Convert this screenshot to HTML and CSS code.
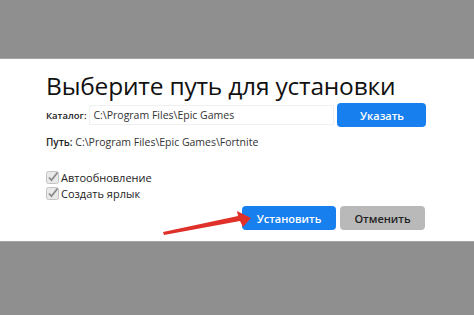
FILE: index.html
```html
<!DOCTYPE html>
<html lang="ru">
<head>
  <meta charset="UTF-8" />
  <title>Выберите путь для установки</title>
  <link rel="stylesheet" href="styles.css">
</head>
<body>
  <div class="band top"></div>

  <div class="dialog">
    <h1>Выберите путь для установки</h1>

    <div class="row">
      <label class="label">Каталог:</label>
      <div class="field">C:\Program Files\Epic Games</div>
      <button class="btn primary pick">Указать</button>
    </div>

    <div class="path"><span class="label">Путь:</span> C:\Program Files\Epic Games\Fortnite</div>

    <div class="checks">
      <div class="check">
        <svg class="box" width="13" height="13" viewBox="0 0 13 13">
          <rect x="0.5" y="0.5" width="12" height="12" rx="2" fill="#e9e9e9" stroke="#c4c4c4"/>
          <path d="M3 6.5 L5.5 9.2 L11.5 1.5" fill="none" stroke="#8a8a8a" stroke-width="1.8"/>
        </svg>
        Автообновление
      </div>
      <div class="check">
        <svg class="box" width="13" height="13" viewBox="0 0 13 13">
          <rect x="0.5" y="0.5" width="12" height="12" rx="2" fill="#e9e9e9" stroke="#c4c4c4"/>
          <path d="M3 6.5 L5.5 9.2 L11.5 1.5" fill="none" stroke="#8a8a8a" stroke-width="1.8"/>
        </svg>
        Создать ярлык
      </div>
    </div>

    <div class="actions">
      <button class="btn primary">Установить</button>
      <button class="btn cancel">Отменить</button>
    </div>

    <svg class="arrow" width="100" height="40" viewBox="0 0 100 40">
      <path d="M3 27 L78 11 L77 6 L91 13 L83 22 L80 16 L4 30 Z" fill="#e0302a"/>
    </svg>
  </div>

  <div class="band bottom"></div>
</body>
</html>
```

FILE: styles.css
```css
body {
  margin: 0;
  font-family: "Open Sans", sans-serif;
  background: #8f8f8f;
  color: #1a1a1a;
}

.band {
  background: #8f8f8f;
}

.top {
  height: 58px;
  border-bottom: 1px solid #a6a6a6;
}

.bottom {
  height: 73px;
  border-top: 1px solid #a6a6a6;
}

.dialog {
  position: relative;
  background: #fff;
  height: 182px;
  padding: 0 46px;
  box-sizing: border-box;
}

h1 {
  margin: 0;
  padding-top: 11px;
  font-size: 24.5px;
  font-weight: 400;
  line-height: 32px;
  letter-spacing: -0.2px;
  color: #111;
}

.row {
  display: flex;
  align-items: center;
  margin-top: 1px;
  height: 24px;
}

.label {
  font-size: 9.5px;
  font-weight: 600;
  color: #222;
}

.path .label {
  font-size: 10px;
}

.field {
  width: 240px;
  height: 18px;
  margin-left: 3px;
  padding-left: 3px;
  border: 1px solid #f0f0f0;
  font-size: 10.5px;
  line-height: 18px;
  color: #333;
}

.btn {
  border: none;
  border-radius: 4px;
  font-family: "Open Sans", sans-serif;
  font-size: 11px;
  font-weight: 600;
  cursor: pointer;
}

.primary {
  background: #1780ee;
  color: #fff;
}

.pick {
  width: 89px;
  height: 24px;
  margin-left: 3px;
}

.path {
  margin-top: 8px;
  font-size: 10.5px;
  color: #333;
}

.checks {
  margin-top: 20px;
}

.check {
  display: flex;
  align-items: center;
  gap: 2px;
  height: 16px;
  font-size: 11px;
  font-weight: 500;
  color: #222;
}

.actions {
  display: flex;
  gap: 4px;
  margin-top: 5px;
  margin-left: 196px;
}

.actions .btn {
  height: 24px;
}

.actions .primary {
  width: 94px;
}

.cancel {
  width: 85px;
  background: #b9b9b9;
  color: #222;
}

.arrow {
  position: absolute;
  left: 160px;
  top: 146px;
}
```
